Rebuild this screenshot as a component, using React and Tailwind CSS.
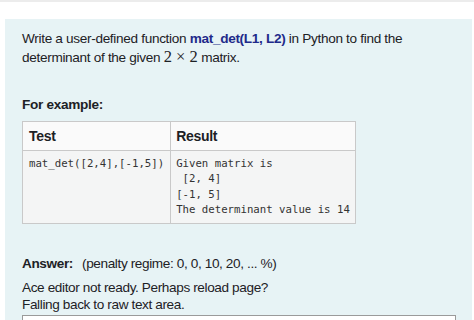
export default function App() {
  const sans = { fontFamily: '"Liberation Sans", Arial, sans-serif' };
  return (
    <div className="w-[474px] h-[320px] overflow-hidden bg-white text-[#1d2125]" style={sans}>
      <div className="h-[2px] bg-[#ececec]" />
      <div className="ml-[5px] mt-[17px] w-[467px] h-[320px] bg-[#e7f3f5] pl-[17px] pt-[11px]">
        <p className="text-[13.6px] leading-[18px] tracking-[-0.32px]">
          Write a user-defined function{" "}
          <span className="font-bold text-[#1f2a8a]">mat_det(L1, L2)</span> in Python to find the
          <br />
          determinant of the given{" "}
          <span className="text-[16.5px] tracking-normal" style={{ fontFamily: '"Liberation Serif", "DejaVu Serif", serif' }}>
            2 × 2
          </span>{" "}
          matrix.
        </p>
        <p className="mt-[29px] text-[13.6px] leading-[18px] font-bold tracking-[-0.3px]">For example:</p>
        <table className="mt-[7px] w-[333px] border-collapse border border-[#c9c9c9]">
          <thead>
            <tr className="h-[29px] bg-[#fafafa]">
              <th className="w-[147px] border border-[#c9c9c9] px-[6px] text-left text-[14px] font-bold tracking-[-0.3px]">Test</th>
              <th className="border border-[#c9c9c9] px-[5px] text-left text-[14px] font-bold tracking-[-0.3px]">Result</th>
            </tr>
          </thead>
          <tbody>
            <tr
              className="bg-[#f4f5f5] align-top text-[10.7px] leading-[15.3px] text-[#333]"
              style={{ fontFamily: '"DejaVu Sans Mono", "Liberation Mono", monospace' }}
            >
              <td className="border border-[#c9c9c9] px-[6px] pt-[5px] pb-[6px] whitespace-pre">mat_det([2,4],[-1,5])</td>
              <td className="border border-[#c9c9c9] px-[5px] pt-[5px] pb-[6px] whitespace-pre">
                {"Given matrix is\n [2, 4]\n[-1, 5]\nThe determinant value is 14"}
              </td>
            </tr>
          </tbody>
        </table>
        <p className="mt-[31px] text-[13.6px] leading-[18px] tracking-[-0.38px]">
          <span className="font-bold">Answer:</span>
          <span className="ml-[9px]">(penalty regime: 0, 0, 10, 20, ... %)</span>
        </p>
        <p className="mt-[6px] text-[13.6px] leading-[17px] tracking-[-0.38px]">
          Ace editor not ready. Perhaps reload page?
          <br />
          Falling back to raw text area.
        </p>
        <div className="mt-[2px] w-[434px] h-[40px] border border-[#9a9a9a] bg-white" />
      </div>
    </div>
  );
}
